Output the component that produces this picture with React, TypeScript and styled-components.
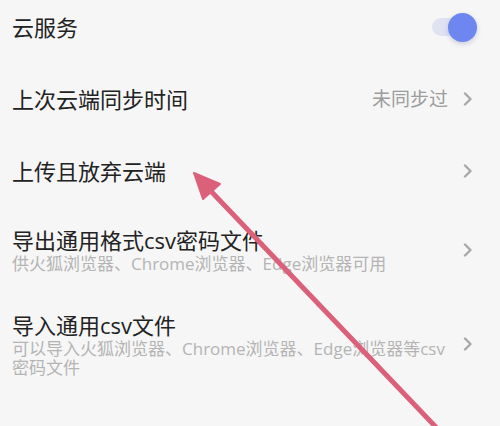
import React from 'react'
import styled, { createGlobalStyle } from 'styled-components'

const GlobalStyle = createGlobalStyle`
    html, body {
        margin: 0;
        padding: 0;
        background: #f6f6f6;
    }
    body {
        font-family: "Open Sans", "Noto Sans CJK SC", sans-serif;
        -webkit-font-smoothing: antialiased;
    }
`

type Item = {
    title: string
    desc?: string
    value?: string
}

const items: Item[] = [
    { title: '上次云端同步时间', value: '未同步过' },
    { title: '上传且放弃云端' },
    { title: '导出通用格式csv密码文件', desc: '供火狐浏览器、Chrome浏览器、Edge浏览器可用' },
    { title: '导入通用csv文件', desc: '可以导入火狐浏览器、Chrome浏览器、Edge浏览器等csv密码文件' },
]

const Chevron = () => (
    <ChevronIcon width="10" height="14" viewBox="0 0 10 14">
        <path d="M2 1.5 L7.5 7 L2 12.5" fill="none" stroke="currentColor" strokeWidth="2.4" strokeLinecap="round" strokeLinejoin="round" />
    </ChevronIcon>
)

const Arrow = () => (
    <ArrowLayer viewBox="0 0 500 426" width="500" height="426">
        <line x1="206" y1="186" x2="452" y2="444" stroke="#db6079" strokeWidth="5" strokeLinecap="round" />
        <polygon points="194,173 203,199 220,184" fill="#db6079" stroke="#db6079" strokeWidth="2" strokeLinejoin="round" />
    </ArrowLayer>
)

const App = () => {
  return (
    <Page>
        <GlobalStyle />
        <List>
            <Row>
                <TextCol>
                    <Title>云服务</Title>
                </TextCol>
                <Switch aria-checked="true" role="switch">
                    <Knob />
                </Switch>
            </Row>
            {items.map((item) => (
                <Row key={item.title} $dense={!!item.desc}>
                    <TextCol>
                        <Title>{item.title}</Title>
                        {item.desc && <Desc>{item.desc}</Desc>}
                    </TextCol>
                    <Trail>
                        {item.value && <Value>{item.value}</Value>}
                        <Chevron />
                    </Trail>
                </Row>
            ))}
        </List>
        <Arrow />
    </Page>
  )
}

const Page = styled.div`
    position: relative;
    width: 500px;
    height: 426px;
    overflow: hidden;
    background: #f6f6f6;
`

const List = styled.div`
    display: flex;
    flex-direction: column;
    margin-top: -9px;
`

const Row = styled.div<{ $dense?: boolean }>`
    display: flex;
    align-items: center;
    justify-content: space-between;
    column-gap: 12px;
    padding: ${({ $dense }) => ($dense ? '19px' : '22px')} 27px ${({ $dense }) => ($dense ? '19px' : '22px')} 12px;
`

const TextCol = styled.div`
    display: flex;
    flex-direction: column;
    min-width: 0;
    flex: 1;
`

const Title = styled.div`
    font-size: 22px;
    line-height: 28px;
    color: #222;
    white-space: nowrap;
`

const Desc = styled.div`
    font-size: 17px;
    line-height: 19px;
    color: #b4b4b4;
`

const Trail = styled.div`
    display: flex;
    align-items: center;
    column-gap: 15px;
    color: #a6a6a6;
`

const Value = styled.span`
    font-size: 19px;
    line-height: 28px;
    color: #9c9c9c;
`

const ChevronIcon = styled.svg`
    display: block;
    color: #a8a8a8;
`

const Switch = styled.div`
    position: relative;
    width: 45px;
    height: 18px;
    margin-right: -4px;
    border-radius: 9px;
    background: #dfe2f1;
`

const Knob = styled.div`
    position: absolute;
    right: 0;
    top: 50%;
    width: 29px;
    height: 29px;
    margin-top: -14.5px;
    border-radius: 50%;
    background: #6e86ef;
    box-shadow: 0 2px 5px rgba(80, 90, 140, 0.25);
`

const ArrowLayer = styled.svg`
    position: absolute;
    left: 0;
    top: 0;
    pointer-events: none;
`

export default App
